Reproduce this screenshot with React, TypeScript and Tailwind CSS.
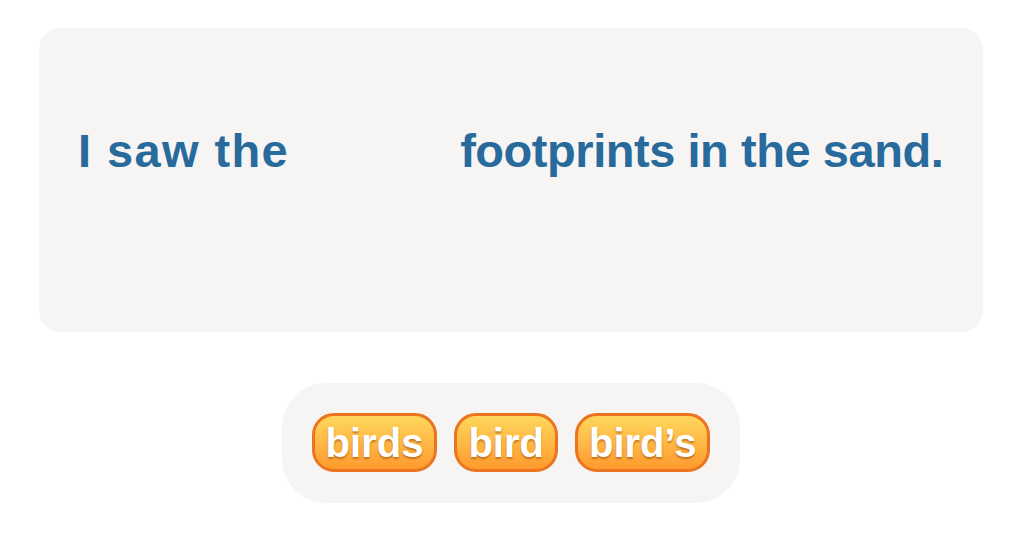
export default function App() {
  const words = ["birds", "bird", "bird’s"];
  return (
    <div className="w-[1022px] h-[533px] bg-white pt-[28px] px-[39px]" style={{ fontFamily: '"Liberation Sans", Arial, sans-serif' }}>
      <div className="h-[304px] rounded-[22px] bg-[#f6f5f4] pl-[39px] pt-[95px]">
        <div className="flex items-baseline text-[47px] font-bold text-[#286a9b] leading-[56px] whitespace-nowrap">
          <span className="tracking-[1.4px]">I saw the</span>
          <span className="inline-block w-[171px]"></span>
          <span className="tracking-[-0.45px]">footprints in the sand.</span>
        </div>
      </div>
      <div className="flex justify-center mt-[51px]">
        <div className="flex gap-[17px] rounded-[44px] bg-[#f6f5f4] px-[30px] pt-[30px] pb-[31px]">
          {words.map((w) => (
            <div
              key={w}
              className="h-[59px] px-[11px] flex items-center rounded-[22px] border-[3px] border-[#ea7420] bg-gradient-to-b from-[#ffd65b] to-[#ff9a2e] text-white font-bold text-[40px] leading-none"
              style={{ textShadow: "0 2px 2px rgba(150,70,10,0.55)" }}
            >
              {w}
            </div>
          ))}
        </div>
      </div>
    </div>
  );
}
